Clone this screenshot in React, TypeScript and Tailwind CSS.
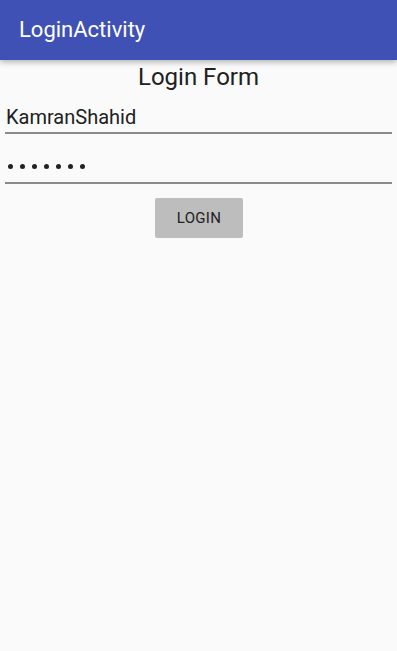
import React from 'react';

const App: React.FC = () => {
  return (
    <div className="w-[397px] h-[651px] bg-[#fafafa] font-['Roboto',sans-serif] overflow-hidden">
      <header className="relative h-[60px] bg-[#3f51b5] flex items-center pl-[19px] shadow-[0_2px_6px_rgba(0,0,0,0.3)]">
        <h1 className="text-white text-[22px] leading-none">LoginActivity</h1>
      </header>
      <main className="px-[5px] flex flex-col">
        <h2 className="text-center text-[24px] text-[#212121] leading-[28px] mt-[3px]">Login Form</h2>
        <div className="mt-[14px] pl-[1px] text-[20px] text-[#212121] leading-[24px]">KamranShahid</div>
        <div className="h-[2px] bg-[#8a8a8a] w-[387px] mt-[3px]" />
        <div className="h-[48px] pl-[3px] pb-[13px] flex items-end gap-[7px]">
          {Array.from({ length: 7 }).map((_, i) => (
            <span key={i} className="w-[5px] h-[5px] rounded-full bg-[#222]" />
          ))}
        </div>
        <div className="h-[2px] bg-[#8a8a8a] w-[387px]" />
        <div className="flex justify-center mt-[14px]">
          <button className="w-[88px] h-[40px] bg-[#bdbdbd] rounded-[2px] text-[15px] text-[#212121] tracking-[0.3px] pl-[1px]">
            LOGIN
          </button>
        </div>
      </main>
    </div>
  );
};

export default App;
